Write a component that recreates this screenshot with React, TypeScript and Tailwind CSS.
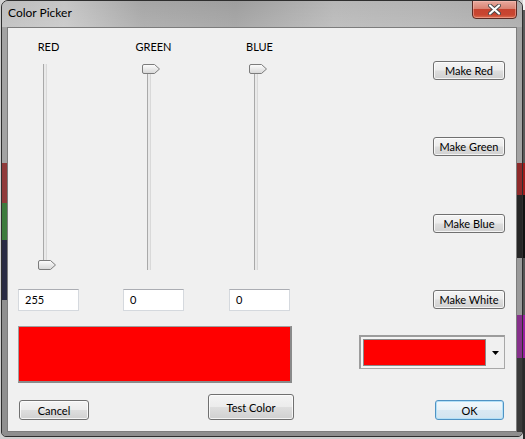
import React from "react";

function WinButton({ label, className }: { label: string; className: string }) {
  return (
    <div
      className={`flex shrink-0 items-center justify-center rounded-[3px] border border-[#707070] bg-[linear-gradient(to_bottom,#f4f4f4_0%,#ececec_48%,#dedede_52%,#d0d0d0_100%)] text-[11px] leading-none text-black shadow-[inset_0_0_0_1px_rgba(255,255,255,0.75)] ${className}`}
    >
      {label}
    </div>
  );
}

function Thumb() {
  return (
    <svg width="18" height="10" viewBox="0 0 18 10">
      <defs>
        <linearGradient id="thumbg" x1="0" y1="0" x2="0" y2="1">
          <stop offset="0" stopColor="#fdfdfd" />
          <stop offset="1" stopColor="#d6d6d6" />
        </linearGradient>
      </defs>
      <path
        d="M2 0.5 H12.5 L17.5 5 L12.5 9.5 H2 Q0.5 9.5 0.5 8 V2 Q0.5 0.5 2 0.5 Z"
        fill="url(#thumbg)"
        stroke="#7c7c7c"
      />
    </svg>
  );
}

function SliderColumn({
  label,
  value,
  atBottom,
  trackClass,
  colClass,
}: {
  label: string;
  value: string;
  atBottom: boolean;
  trackClass: string;
  colClass: string;
}) {
  return (
    <div className={`flex w-[61px] shrink-0 flex-col ${colClass}`}>
      <div className="h-[13px] text-center text-[11px] leading-[13px] text-black">{label}</div>
      <div className="mt-[11px] flex h-[206px]">
        <div
          className={`relative h-full w-[4px] border-l border-r border-l-[#a9a9a9] border-r-[#d9d9d9] bg-[#e9e9e9] ${trackClass}`}
        >
          <div className={`absolute left-[-6px] ${atBottom ? "bottom-0" : "top-0"} flex`}>
            <Thumb />
          </div>
        </div>
      </div>
      <div className="mt-[19px] flex h-[22px] items-center border border-[#d5d9de] border-t-[#abadb3] bg-white pl-[6px] text-[11px] text-black">
        {value}
      </div>
    </div>
  );
}

export default function App() {
  return (
    <div className="flex h-[439px] w-[525px] overflow-hidden bg-[#d4d4d4] font-['Lato','Liberation_Sans',Arial,sans-serif]">
      <div className="w-[1px] shrink-0 bg-[#cfcfcf]" />
      <div className="flex w-[522px] shrink-0 flex-col">
        <div className="flex h-[437px] w-[522px] flex-col overflow-hidden rounded-t-[7px] rounded-b-[5px] border border-[#2e2e2e] bg-[#a7a7a7]">
          {/* title bar */}
          <div className="flex h-[26px] shrink-0 items-start bg-[linear-gradient(to_bottom,rgba(255,255,255,0)_0%,rgba(255,255,255,0.12)_100%),linear-gradient(to_right,#bdbdbd_0%,#c6c6c6_12%,#a6a6a6_27%,#9e9e9e_45%,#b7b7b7_64%,#b3b3b3_80%,#a8a8a8_100%)]">
            <span className="ml-[6px] mt-[5px] text-[12px] leading-[14px] text-black">Color Picker</span>
            <div className="-mt-[1px] ml-auto mr-[5px] flex h-[19px] w-[45px] items-center justify-center rounded-b-[4px] border border-[#5a2a24] bg-[linear-gradient(to_bottom,#e9aa9e_0%,#d98373_45%,#c6432f_50%,#c94631_82%,#dc7253_100%)] shadow-[inset_0_0_0_1px_rgba(255,200,190,0.45)]">
              <svg width="13" height="11" viewBox="0 0 13 11">
                <path d="M2 1.5 L11 9.5 M11 1.5 L2 9.5" stroke="#4a4a4a" strokeWidth="4" strokeLinecap="round" />
                <path d="M2 1.5 L11 9.5 M11 1.5 L2 9.5" stroke="#ffffff" strokeWidth="2.2" strokeLinecap="round" />
              </svg>
            </div>
          </div>
          {/* middle */}
          <div className="flex h-[405px] shrink-0">
            <div className="flex w-[5px] shrink-0 flex-col">
              <div className="h-[136px] bg-[#a3a3a3]" />
              <div className="h-[40px] bg-[#8f3a3a]" />
              <div className="h-[37px] bg-[#3d7a3d]" />
              <div className="h-[60px] bg-[#2a2c44]" />
              <div className="flex-1 bg-[#8f8f8f]" />
            </div>
            {/* client */}
            <div className="flex w-[510px] shrink-0 border border-[#7c7c7c] bg-[#f0f0f0]">
              <div className="ml-[10px] flex flex-col pt-[12px]">
                <div className="flex">
                  <SliderColumn label="RED" value="255" atBottom={true} trackClass="ml-[25px]" colClass="" />
                  <SliderColumn label="GREEN" value="0" atBottom={false} trackClass="ml-[24px]" colClass="ml-[44px]" />
                  <SliderColumn label="BLUE" value="0" atBottom={false} trackClass="ml-[25px]" colClass="ml-[45px]" />
                </div>
                <div className="mt-[15px] h-[57px] w-[274px] border-l border-t border-[#a0a0a0] border-b-2 border-r-2 border-b-[#8a8a8a] border-r-[#8a8a8a] bg-[#ff0000]" />
                <div className="mt-[11px] flex h-[26px] items-end">
                  <WinButton label="Cancel" className="ml-[1px] h-[20px] w-[70px]" />
                  <WinButton label="Test Color" className="ml-[119px] h-[26px] w-[86px]" />
                </div>
              </div>
              <div className="ml-auto mr-[11px] flex flex-col items-end">
                <WinButton label="Make Red" className="mt-[33px] h-[19px] w-[72px]" />
                <WinButton label="Make Green" className="mt-[57px] h-[19px] w-[72px]" />
                <WinButton label="Make Blue" className="mt-[58px] h-[19px] w-[72px]" />
                <WinButton label="Make White" className="mt-[57px] h-[19px] w-[72px]" />
                <div className="mt-[26px] flex h-[34px] w-[146px] border-l-2 border-t-2 border-b border-r border-l-[#9c9c9c] border-t-[#9c9c9c] border-b-[#a8a8a8] border-r-[#a8a8a8] bg-[#f4f4f4]">
                  <div className="flex flex-1 pb-[2px] pl-[2px] pt-[2px]">
                    <div className="flex-1 border border-[#8a8a8a] bg-[#ff0000]" />
                  </div>
                  <div className="flex w-[18px] items-center justify-center bg-[#f0f0f0]">
                    <svg width="7" height="4" viewBox="0 0 7 4">
                      <path d="M0 0 H7 L3.5 4 Z" fill="#000" />
                    </svg>
                  </div>
                </div>
                <div className="mr-[1px] mt-[31px] flex h-[20px] w-[69px] items-center justify-center rounded-[3px] border border-[#4f93c4] bg-[linear-gradient(to_bottom,#f2f8fc_0%,#e8f2f8_48%,#d9e9f3_52%,#d2e4ef_100%)] text-[11px] leading-none text-black shadow-[inset_0_0_0_1px_#b3e0f7]">
                  OK
                </div>
              </div>
            </div>
            <div className="flex w-[5px] shrink-0 flex-col">
              <div className="h-[136px] bg-[#a3a3a3]" />
              <div className="h-[32px] bg-[#8e2a2a]" />
              <div className="h-[63px] bg-[#262626]" />
              <div className="h-[57px] bg-[#9a9a9a]" />
              <div className="h-[43px] bg-[#86308a]" />
              <div className="flex-1 bg-[#3a3a3a]" />
            </div>
          </div>
          {/* bottom frame */}
          <div className="flex-1 bg-[#8e8e8e]" />
        </div>
        <div className="h-[2px] bg-[#cfcfcf]" />
      </div>
      <div className="flex w-[2px] shrink-0 flex-col">
        <div className="h-[10px] bg-[#f4f4f4]" />
        <div className="h-[153px] bg-[#5a5a5a]" />
        <div className="h-[32px] bg-[#a01c1c]" />
        <div className="h-[63px] bg-[#111111]" />
        <div className="h-[57px] bg-[#555555]" />
        <div className="h-[43px] bg-[#9a1fa0]" />
        <div className="flex-1 bg-[#2a2a2a]" />
      </div>
    </div>
  );
}
